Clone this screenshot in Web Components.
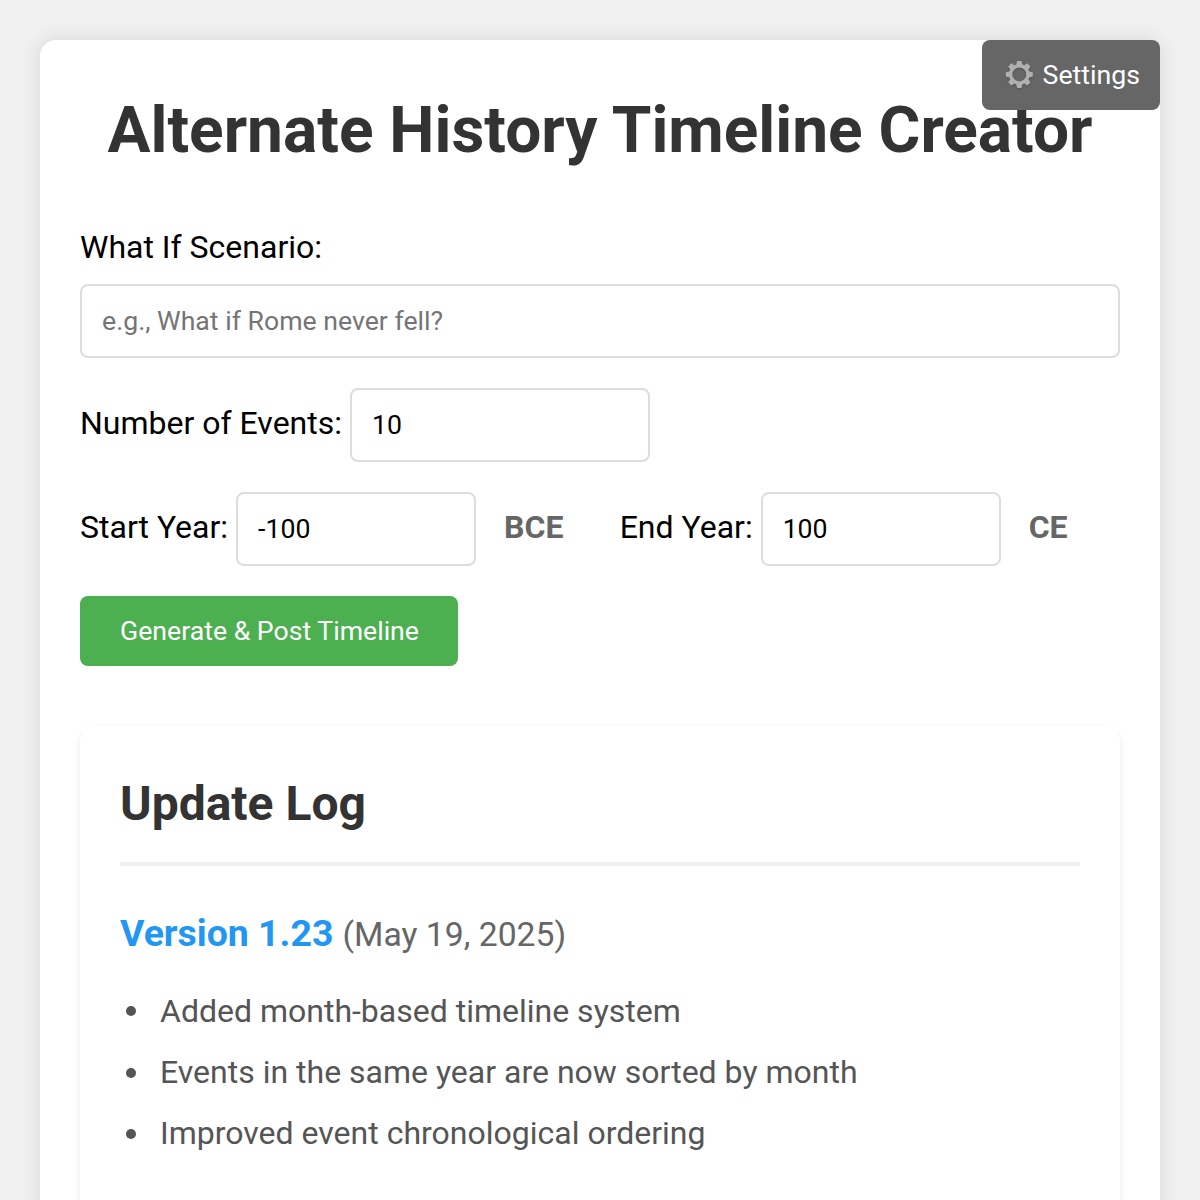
<!DOCTYPE html>
<html lang="en">
<head>
<meta charset="UTF-8">
<title>Alternate History Timeline Creator</title>
<style>
  html {
    background: #f0f0f0;
  }

  body {
    margin: 0;
    height: 1200px;
    overflow: hidden;
    font-family: Roboto, "Liberation Sans", sans-serif;
    font-size: 32px;
    line-height: 1.6;
    color: #000;
  }
</style>
</head>
<body>
<timeline-app>
  <settings-button slot="settings">Settings</settings-button>
  <span slot="title">Alternate History Timeline Creator</span>

  <form-field label="What If Scenario:" placeholder="e.g., What if Rome never fell?" stacked></form-field>
  <form-field label="Number of Events:" value="10" width="300"></form-field>
  <year-range>
    <form-field label="Start Year:" value="-100" width="240" era="BCE"></form-field>
    <form-field label="End Year:" value="100" width="240" era="CE"></form-field>
  </year-range>
  <action-button>Generate &amp; Post Timeline</action-button>

  <update-log>
    <span slot="title">Update Log</span>
    <log-entry version="Version 1.23" date="(May 19, 2025)">
      <log-item>Added month-based timeline system</log-item>
      <log-item>Events in the same year are now sorted by month</log-item>
      <log-item>Improved event chronological ordering</log-item>
    </log-entry>
  </update-log>
</timeline-app>

<script>
class TimelineApp extends HTMLElement {
  constructor() {
    super();
    this.attachShadow({ mode: "open" });
    this.shadowRoot.innerHTML = `
      <style>
        :host {
          display: block;
          padding: 40px;
        }

        main {
          position: relative;
          box-sizing: border-box;
          min-height: 1400px;
          padding: 40px;
          border-radius: 16px;
          background: #fff;
          box-shadow: 0 0 20px rgba(0, 0, 0, 0.1);
        }

        h1 {
          margin: 0 0 40px;
          font-size: 64px;
          text-align: center;
          white-space: nowrap;
          color: #333;
        }

        /* floats over the corner of the card */
        slot[name="settings"] {
          display: block;
          position: absolute;
          top: 0;
          right: 0;
        }
      </style>
      <main>
        <h1><slot name="title"></slot></h1>
        <slot></slot>
        <slot name="settings"></slot>
      </main>
    `;
  }
}

class SettingsButton extends HTMLElement {
  constructor() {
    super();
    this.attachShadow({ mode: "open" });
    this.shadowRoot.innerHTML = `
      <style>
        :host {
          display: block;
        }

        button {
          display: flex;
          align-items: center;
          box-sizing: border-box;
          width: 178px;
          height: 70px;
          padding: 0 20px;
          border: none;
          border-radius: 8px;
          background: #666;
          color: #fff;
          font-family: inherit;
          font-size: 26.667px;
          line-height: normal;
          white-space: nowrap;
          cursor: pointer;
        }

        svg {
          flex: none;
          width: 34px;
          height: 34px;
          margin-right: 6.6px;
          filter: drop-shadow(0 1px 1px rgba(0, 0, 0, 0.2)) blur(0.7px);
        }
      </style>
      <button>
        <svg viewBox="-17.3 -16.4 34 34">
          <circle r="8.7" fill="none" stroke="#b0b0b0" stroke-width="3.4"/>
          <g id="teeth" fill="#b0b0b0"></g>
        </svg>
        <slot></slot>
      </button>
    `;

    let teeth = "";
    for (let i = 0; i < 8; i++) {
      teeth += `<path d="M-3.1-9.5 L-2.2-13.5 H2.2 L3.1-9.5 Z" transform="rotate(${i * 45})"/>`;
    }
    this.shadowRoot.querySelector("#teeth").innerHTML = teeth;
  }
}

class FormField extends HTMLElement {
  constructor() {
    super();
    this.attachShadow({ mode: "open" });
    this.shadowRoot.innerHTML = `
      <style>
        :host {
          display: flex;
          align-items: baseline;
          gap: 8px;
          margin-bottom: 30px;
        }

        :host([stacked]) {
          flex-direction: column;
          align-items: stretch;
          gap: 10px;
        }

        label {
          white-space: nowrap;
        }

        input {
          box-sizing: border-box;
          height: 74px;
          padding: 20px;
          border: 2px solid #ddd;
          border-radius: 8px;
          background: #fff;
          color: #000;
          font-family: inherit;
          font-size: 26.667px;
          outline: none;
        }

        input::placeholder {
          color: #757575;
        }

        b {
          margin-left: 20px;
          color: #666;
        }
      </style>
      <label for="field"></label>
      <input id="field" type="text">
    `;
  }

  connectedCallback() {
    const input = this.shadowRoot.querySelector("input");
    this.shadowRoot.querySelector("label").textContent = this.getAttribute("label");
    input.placeholder = this.getAttribute("placeholder") || "";
    input.value = this.getAttribute("value") || "";

    if (this.hasAttribute("width")) {
      input.style.width = `${this.getAttribute("width")}px`;
    }

    if (this.hasAttribute("era")) {
      const era = document.createElement("b");
      era.textContent = this.getAttribute("era");
      this.shadowRoot.append(era);
    }
  }
}

class YearRange extends HTMLElement {
  constructor() {
    super();
    this.attachShadow({ mode: "open" });
    this.shadowRoot.innerHTML = `
      <style>
        :host {
          display: flex;
          align-items: baseline;
          gap: 56.2px;
        }
      </style>
      <slot></slot>
    `;
  }
}

class ActionButton extends HTMLElement {
  constructor() {
    super();
    this.attachShadow({ mode: "open" });
    this.shadowRoot.innerHTML = `
      <style>
        :host {
          display: flex;
          margin-bottom: 60px;
        }

        button {
          box-sizing: border-box;
          width: 378px;
          height: 70px;
          padding: 0 0 0 1px;
          border: none;
          border-radius: 8px;
          background: #4caf50;
          color: #fff;
          font-family: inherit;
          font-size: 26.667px;
          line-height: normal;
          white-space: nowrap;
          cursor: pointer;
        }
      </style>
      <button><slot></slot></button>
    `;
  }
}

class UpdateLog extends HTMLElement {
  constructor() {
    super();
    this.attachShadow({ mode: "open" });
    this.shadowRoot.innerHTML = `
      <style>
        :host {
          display: block;
          box-sizing: border-box;
          min-height: 600px;
          padding: 40px;
          border-radius: 16px;
          background: #fff;
          box-shadow: 0 4px 8px rgba(0, 0, 0, 0.09);
        }

        h2 {
          margin: 0 0 38px;
          padding-bottom: 20px;
          border-bottom: 4px solid #f0f0f0;
          font-size: 48px;
          color: #333;
        }
      </style>
      <h2><slot name="title"></slot></h2>
      <slot></slot>
    `;
  }
}

class LogEntry extends HTMLElement {
  constructor() {
    super();
    this.attachShadow({ mode: "open" });
    this.shadowRoot.innerHTML = `
      <style>
        :host {
          display: block;
        }

        header {
          display: flex;
          align-items: baseline;
          gap: 9.2px;
          margin-bottom: 21.6px;
        }

        h3 {
          margin: 0;
          font-size: 1.17em;
          color: #2196f3;
        }

        time {
          font-size: 33.7px;
          color: #666;
        }

        ul {
          margin: 0;
          padding: 0;
          color: #555;
        }
      </style>
      <header>
        <h3></h3>
        <time></time>
      </header>
      <ul><slot></slot></ul>
    `;
  }

  connectedCallback() {
    this.shadowRoot.querySelector("h3").textContent = this.getAttribute("version");
    this.shadowRoot.querySelector("time").textContent = this.getAttribute("date");
  }
}

class LogItem extends HTMLElement {
  constructor() {
    super();
    this.attachShadow({ mode: "open" });
    this.shadowRoot.innerHTML = `
      <style>
        :host {
          display: flex;
          align-items: center;
          margin-bottom: 10px;
        }

        :host::before {
          content: "";
          width: 10px;
          height: 10px;
          margin: 0 24px 0 6px;
          border-radius: 50%;
          background: currentColor;
        }
      </style>
      <slot></slot>
    `;
  }
}

customElements.define("timeline-app", TimelineApp);
customElements.define("settings-button", SettingsButton);
customElements.define("form-field", FormField);
customElements.define("year-range", YearRange);
customElements.define("action-button", ActionButton);
customElements.define("update-log", UpdateLog);
customElements.define("log-entry", LogEntry);
customElements.define("log-item", LogItem);
</script>
</body>
</html>
